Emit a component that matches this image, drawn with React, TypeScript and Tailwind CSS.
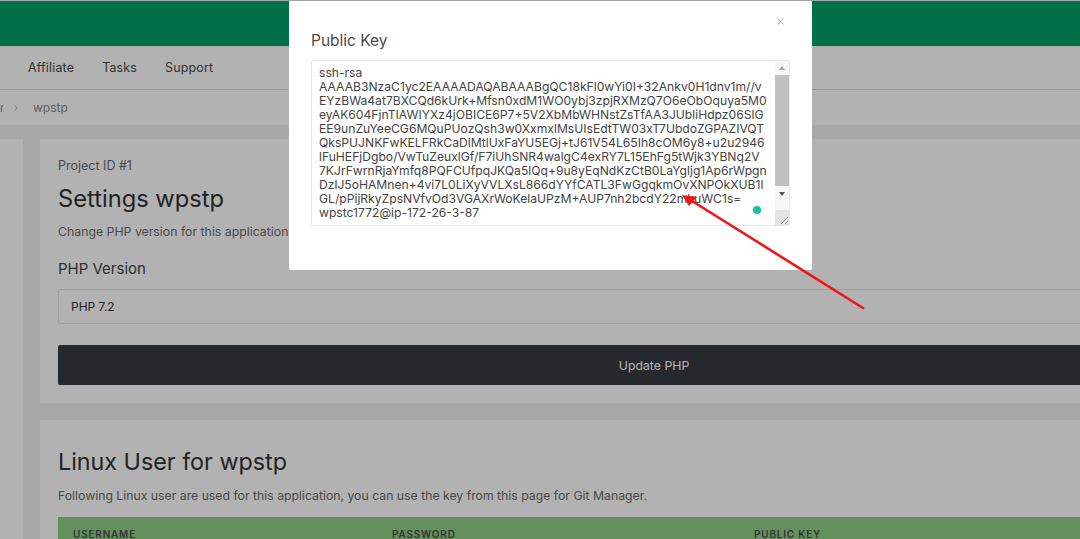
import { ChevronRight, X } from 'lucide-react';

const keyLines = [
  'ssh-rsa',
  'AAAAB3NzaC1yc2EAAAADAQABAAABgQC18kFl0wYi0I+32Ankv0H1dnv1m//v',
  'EYzBWa4at7BXCQd6kUrk+Mfsn0xdM1WO0ybj3zpjRXMzQ7O6eObOquya5M0',
  'eyAK604FjnTIAWIYXz4jOBICE6P7+5V2XbMbWHNstZsTfAA3JUbliHdpz06SlG',
  'EE9unZuYeeCG6MQuPUozQsh3w0XxmxlMsUIsEdtTW03xT7UbdoZGPAZIVQT',
  'QksPUJNKFwKELFRkCaDlMtlUxFaYU5EGj+tJ61V54L65Ih8cOM6y8+u2u2946',
  'lFuHEFjDgbo/VwTuZeuxlGf/F7iUhSNR4walgC4exRY7L15EhFg5tWjk3YBNq2V',
  '7KJrFwrnRjaYmfq8PQFCUfpqJKQa5lQq+9u8yEqNdKzCtB0LaYgljg1Ap6rWpgn',
  'DzlJ5oHAMnen+4vi7L0LiXyVVLXsL866dYYfCATL3FwGgqkmOvXNPOkXUB1l',
  'GL/pPijRkyZpsNVfvOd3VGAXrWoKelaUPzM+AUP7nh2bcdY22mkuWC1s=',
  'wpstc1772@ip-172-26-3-87',
];

export default function App() {
  return (
    <div className="relative h-[539px] w-[1080px] overflow-hidden bg-[#f1f1f1] font-['Inter',sans-serif] text-[#3d3d3d]">
      {/* Page behind the modal */}
      <div className="w-[1290px]">
        <div className="h-[46px] border-t border-[#e6edf2] bg-[#00a169]" />
        <nav className="flex h-[44px] items-center gap-[28px] border-b border-[#dcdcdc] bg-white pl-[28px] pt-[1px] text-[12.4px] tracking-[0.2px] text-[#4a4a4a]">
          <span>Affiliate</span>
          <span>Tasks</span>
          <span>Support</span>
        </nav>
        <div className="flex h-[35px] items-center bg-white text-[12px] text-[#8a8a8a]">
          <span className="w-[3px] overflow-hidden text-right">r</span>
          <ChevronRight className="ml-[8px] h-3 w-[10px]" strokeWidth={2} />
          <span className="ml-[12px]">wpstp</span>
        </div>

        <div className="flex gap-[17px] pt-[14px]">
          <aside className="h-[500px] w-[23px] shrink-0 bg-white" />
          <main className="flex w-[1228px] flex-col gap-[17px]">
            {/* PHP settings card */}
            <section className="h-[264px] bg-white px-[18px] pt-[18px]">
              <p className="text-[12.5px] leading-[18px] text-[#6b6b6b]">Project ID #1</p>
              <h1 className="mt-[8px] text-[23.7px] leading-[32px] text-[#333]">Settings wpstp</h1>
              <p className="mt-[8px] text-[12.3px] leading-[18px] text-[#6b6b6b]">Change PHP version for this application.</p>
              <h2 className="mt-[17px] text-[15px] leading-[22px] text-[#444]">PHP Version</h2>
              <div className="mt-[9px] flex h-[35px] items-center rounded-[2px] border border-[#e6e6e6] pl-[12px] text-[12px] text-[#333]">PHP 7.2</div>
              <button className="mt-[21px] h-[40px] w-full rounded-[2px] bg-[#353a3f] pt-[2px] text-[12.3px] text-white">Update PHP</button>
            </section>

            {/* Linux user card */}
            <section className="h-[200px] bg-white px-[18px] pt-[26px]">
              <h2 className="text-[23.3px] leading-[32px] text-[#333]">Linux User for wpstp</h2>
              <p className="mt-[9px] text-[12.25px] leading-[18px] text-[#6b6b6b]">Following Linux user are used for this application, you can use the key from this page for Git Manager.</p>
              <div className="mt-[12px] flex h-[40px] bg-[#8ecf85] pl-[15px] pt-[10px] text-[10px] font-semibold tracking-[0.8px] text-[#4d4d4d]">
                <span className="w-[319px]">USERNAME</span>
                <span className="w-[362px]">PASSWORD</span>
                <span>PUBLIC KEY</span>
              </div>
            </section>
          </main>
        </div>
      </div>

      {/* Backdrop */}
      <div className="absolute inset-0 bg-black/30" />

      {/* Modal */}
      <div className="absolute left-[289px] top-[1px] h-[269px] w-[523px] rounded-b-[2px] bg-white px-[22px] pt-[30px]">
        <button className="absolute right-[26px] top-[15px] text-[#8a8a8a]" aria-label="Close">
          <X className="h-[11px] w-[11px]" strokeWidth={1.5} />
        </button>
        <h3 className="text-[15.5px] leading-[20px] text-[#4a4a4a]">Public Key</h3>
        <div className="relative mt-[9px] flex h-[166px] w-[479px] rounded-[2px] border border-[#e8e8e8]">
          <div className="flex-1 pl-[7px] pt-[5px] font-['Inter',sans-serif] text-[12.13px] leading-[14px] text-[#444]">
            {keyLines.map((line) => (
              <div key={line} className="whitespace-nowrap">{line}</div>
            ))}
          </div>
          {/* Scrollbar */}
          <div className="flex w-[14px] shrink-0 flex-col items-center bg-[#f6f6f6]">
            <div className="flex h-[14px] items-center justify-center">
              <div className="h-0 w-0 border-x-[3.5px] border-b-[4px] border-x-transparent border-b-[#a8a8a8]" />
            </div>
            <div className="h-[111px] w-full bg-[#c1c1c1]" />
            <div className="flex h-[16px] items-center justify-center">
              <div className="h-0 w-0 border-x-[3.5px] border-t-[4px] border-x-transparent border-t-[#505050]" />
            </div>
            <div className="relative mt-auto h-[15px] w-full bg-[#e4e4e4]">
              <svg className="absolute bottom-0 right-0" width="10" height="10" viewBox="0 0 10 10" fill="none" stroke="#8f8f8f">
                <path d="M2 9 9 2M6 9 9 6" />
              </svg>
            </div>
          </div>
          <span className="absolute left-[441px] top-[145px] h-[8px] w-[8px] rounded-full bg-[#14c39a]" />
        </div>
      </div>

      {/* Red annotation arrow */}
      <svg className="absolute left-0 top-0" width="1080" height="539" viewBox="0 0 1080 539" fill="none">
        <path d="M863 308 692 201" stroke="#f01414" strokeWidth="2.6" strokeLinecap="round" />
        <path d="M682 195 697 197 689 206Z" fill="#f01414" />
      </svg>
    </div>
  );
}
